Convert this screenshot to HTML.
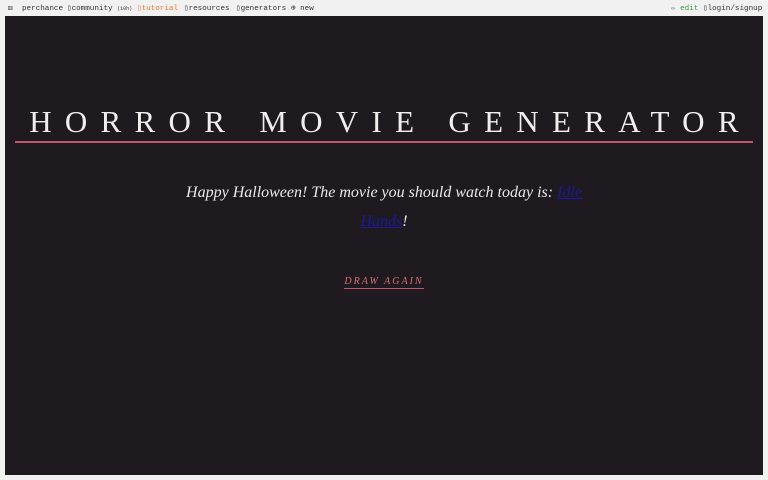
<!DOCTYPE html>
<html><head><style>
html,body{margin:0;padding:0;width:768px;height:480px;background:#f1f1f1;overflow:hidden}
.bar{position:absolute;top:0;left:0;right:0;height:16px;font:7.6px "Liberation Mono",monospace;color:#333;line-height:18px}
.bar span{position:absolute;top:0}
.main{position:absolute;left:5px;top:16px;width:758px;height:459px;background:#1e1a20}
h1{position:absolute;left:10px;width:738px;top:88px;margin:0;text-align:center;font:31px "Liberation Serif",serif;color:#f2eef0;letter-spacing:13.3px;padding-left:13px;box-sizing:border-box;white-space:nowrap}
.line{position:absolute;left:10px;width:738px;top:125px;height:2px;background:#c0576a}
.txt{position:absolute;left:0;width:758px;top:162px;text-align:center;font:italic 16px/29px "Liberation Serif",serif;color:#ece8ec}
.txt p{margin:0 auto;width:410px}
.txt a{color:#1a1a9a;text-decoration:underline}
.btn{position:absolute;left:0;width:758px;top:260px;text-align:center;font:italic 10px "Liberation Serif",serif;letter-spacing:2px;color:#d8707f}
.btn span{border-bottom:1.5px solid #c0576a;padding-bottom:1px}
</style></head><body>
<div class="bar">
<span style="left:8px">⚄</span><span style="left:22px">perchance</span>
<span style="left:67px">▯community <small style="font-size:5px">(10h)</small></span>
<span style="left:137px;color:#e8773a">▯tutorial</span>
<span style="left:184px">▯resources</span>
<span style="left:236px">▯generators</span>
<span style="left:291px">⊕ new</span>
<span style="left:671px;color:#3a9a3a">✏ edit</span>
<span style="left:703px">▯login/signup</span>
</div>
<div class="main">
<h1>HORROR MOVIE GENERATOR</h1>
<div class="line"></div>
<div class="txt"><p>Happy Halloween! The movie you should watch today is: <a>Idle Hands</a>!</p></div>
<div class="btn"><span>DRAW AGAIN</span></div>
</div>
</body></html>
